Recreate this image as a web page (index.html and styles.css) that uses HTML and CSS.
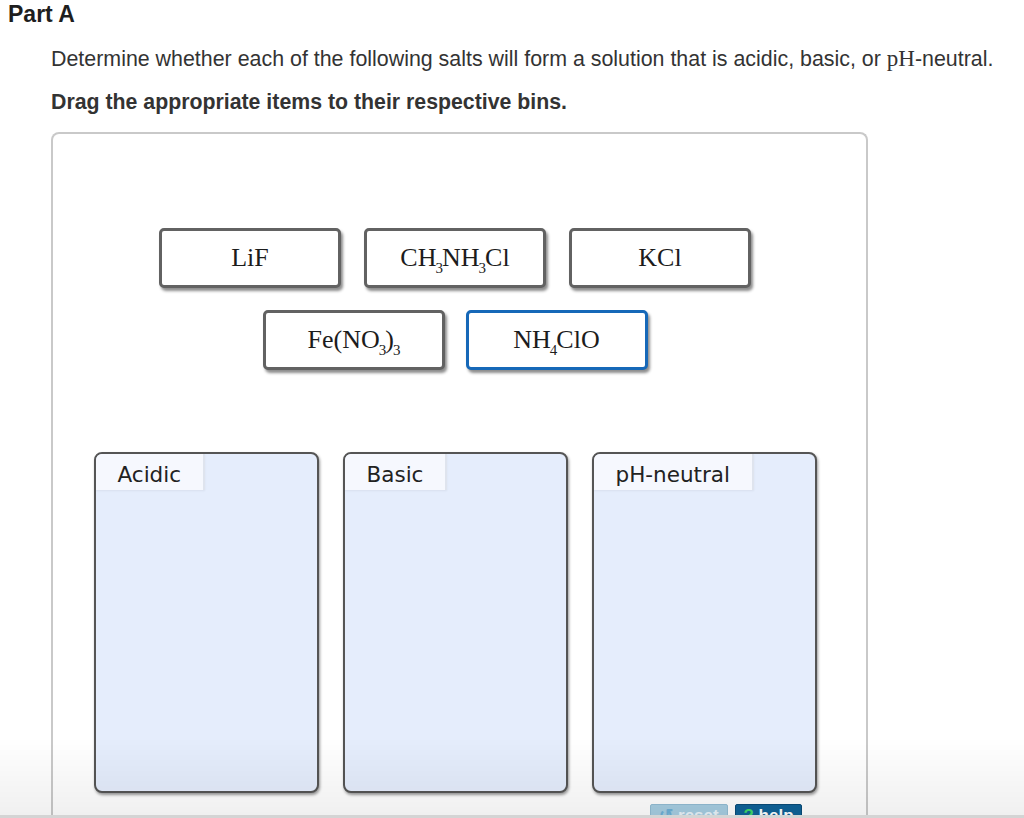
FILE: index.html
```html
<!DOCTYPE html>
<html>
<head>
<meta charset="utf-8">
<link rel="stylesheet" href="styles.css">
</head>
<body>
<h2 class="part-title">Part A</h2>
<p class="prompt">Determine whether each of the following salts will form a solution that is acidic, basic, or <span class="math">pH</span>-neutral.</p>
<p class="instruction">Drag the appropriate items to their respective bins.</p>
<div class="workspace">
  <div class="item-row">
    <div class="item"><span class="formula">LiF</span></div>
    <div class="item"><span class="formula">CH<sub>3</sub>NH<sub>3</sub>Cl</span></div>
    <div class="item"><span class="formula">KCl</span></div>
  </div>
  <div class="item-row row-two">
    <div class="item"><span class="formula">Fe(NO<sub>3</sub>)<sub>3</sub></span></div>
    <div class="item selected"><span class="formula">NH<sub>4</sub>ClO</span></div>
  </div>
  <div class="bins">
    <div class="bin"><div class="bin-label">Acidic</div></div>
    <div class="bin"><div class="bin-label">Basic</div></div>
    <div class="bin"><div class="bin-label">pH-neutral</div></div>
  </div>
  <div class="actions">
    <button class="btn btn-reset"><span class="btn-icon">&#8634;</span> reset</button>
    <button class="btn btn-help"><span class="help-q">?</span> help</button>
  </div>
</div>
<div class="bottom-fade"></div>
</body>
</html>
```

FILE: styles.css
```css
html, body {
  overflow: hidden;
  height: 100%;
}
body {
  margin: 0;
  padding: 0 8px;
  background: #ffffff;
  font-family: "Liberation Sans", Arial, sans-serif;
  color: #262626;
}
.part-title {
  margin: 0;
  font-size: 23px;
  line-height: 28px;
  font-weight: bold;
  color: #1e1e1e;
}
.prompt {
  margin: 19px 0 0 43px;
  font-size: 21.4px;
  line-height: 24px;
  color: #333333;
}
.math {
  font-family: "Liberation Serif", "Times New Roman", serif;
  font-size: 23px;
}
.instruction {
  margin: 19px 0 0 43px;
  font-size: 21.3px;
  line-height: 24px;
  font-weight: bold;
  color: #333333;
}
.workspace {
  margin: 18px 0 0 43px;
  width: 817px;
  box-sizing: border-box;
  height: 760px;
  border: 2px solid #c9c9c9;
  border-bottom: none;
  border-radius: 8px 8px 0 0;
  padding: 94px 9px 0 0;
}
.item-row {
  display: flex;
  justify-content: center;
  gap: 23px;
}
.row-two {
  margin-top: 22px;
  gap: 21px;
}
.item {
  width: 182px;
  height: 60px;
  box-sizing: border-box;
  border: 3px solid #626262;
  border-radius: 5px;
  background: #ffffff;
  box-shadow: 2px 3px 3px rgba(0, 0, 0, 0.45);
  display: flex;
  align-items: center;
  justify-content: center;
  font-family: "Liberation Serif", "Times New Roman", serif;
  font-size: 26px;
  color: #1c1c1c;
}
.formula {
  line-height: 30px;
  white-space: nowrap;
}
.formula sub {
  font-size: 15px;
  line-height: 0;
  vertical-align: -7px;
  margin: 0 -1px;
}
.item.selected {
  border-color: #1668b8;
}
.bins {
  margin-top: 82px;
  display: flex;
  justify-content: center;
  gap: 24px;
}
.bin {
  width: 225px;
  height: 341px;
  box-sizing: border-box;
  border: 2px solid #555555;
  border-radius: 8px;
  background: #e5edfc;
  box-shadow: 1px 2px 3px rgba(0, 0, 0, 0.4);
  overflow: hidden;
  display: flex;
  align-items: flex-start;
}
.bin-label {
  height: 36px;
  box-sizing: border-box;
  padding: 5px 22px 0;
  background: #f6f8fe;
  border-right: 2px solid #dfe4ee;
  box-shadow: 0 1px 2px rgba(0, 0, 0, 0.06);
  font-family: "DejaVu Sans", Verdana, sans-serif;
  font-size: 21.5px;
  line-height: 31px;
  color: #222222;
}
.actions {
  margin-top: 11px;
  display: flex;
  justify-content: flex-end;
  gap: 7px;
  padding-right: 55px;
}
.btn {
  height: 24px;
  box-sizing: border-box;
  border-radius: 2px;
  font-family: "Liberation Sans", Arial, sans-serif;
  font-weight: bold;
  font-size: 17px;
  line-height: 20px;
  padding: 0 4px;
  white-space: nowrap;
  color: #ffffff;
}
.btn-reset {
  width: 78px;
  background: #a7cee2;
  border: 1px solid #93bdd4;
  color: #eaf4fa;
}
.btn-icon {
  color: #6fb0d6;
}
.btn-help {
  width: 67px;
  background: #0f6398;
  border: 1px solid #0a4c78;
}
.help-q {
  color: #3fd86a;
}
.bottom-fade {
  position: fixed;
  left: 0;
  right: 0;
  bottom: 0;
  height: 78px;
  background: linear-gradient(to bottom, rgba(0, 0, 0, 0), rgba(0, 0, 0, 0.06));
  border-bottom: 3px solid #d4d4d4;
  pointer-events: none;
}
```
